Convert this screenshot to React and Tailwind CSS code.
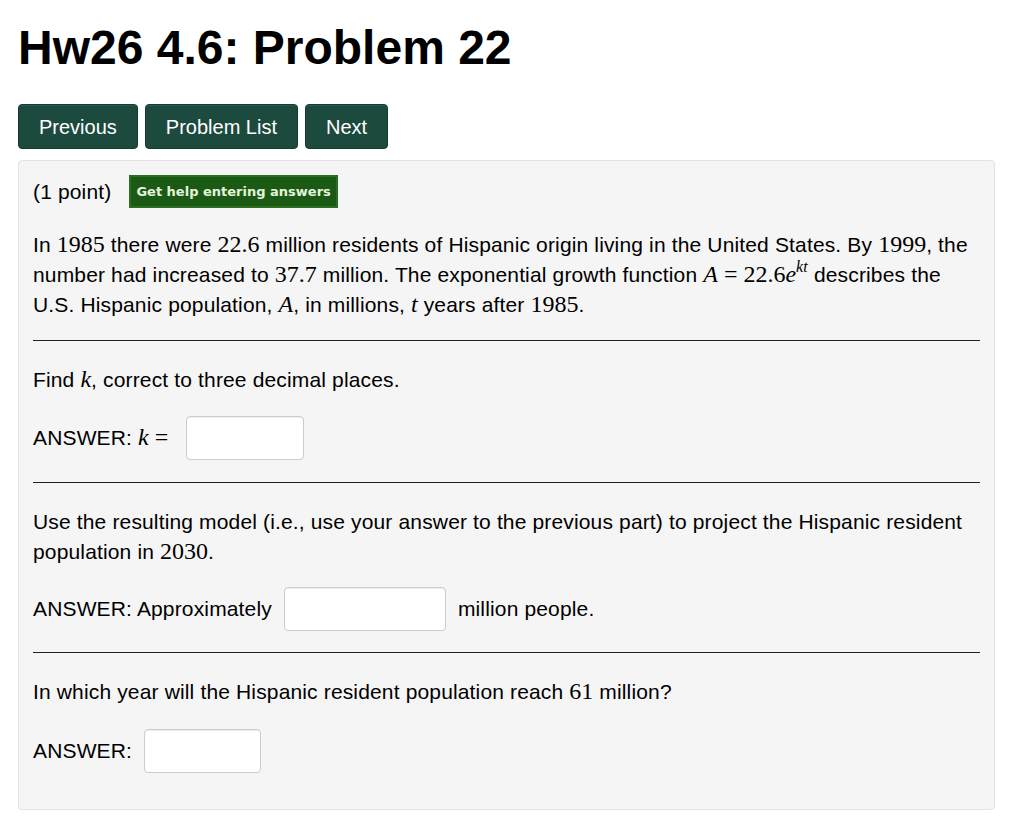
import React from "react";

const M = ({ children, className = "" }) => (
  <span className={`font-['Liberation_Serif',serif] text-[24px] leading-none tracking-normal ${className}`}>{children}</span>
);

const V = ({ children }) => <M className="italic">{children}</M>;

const Eq = () => <M className="mx-[6px]">=</M>;

function NavButton({ children }) {
  return (
    <button className="h-[45px] px-[20px] rounded-[4px] bg-[#1d4a3e] border border-[#163b31] text-white text-[20px] shadow-[inset_0_1px_0_rgba(255,255,255,0.08)]">
      {children}
    </button>
  );
}

function AnswerBox({ w }) {
  return (
    <input
      type="text"
      className={`${w} h-[44px] rounded-[4px] border border-[#cccccc] bg-white shadow-[inset_0_1px_1px_rgba(0,0,0,0.075)] outline-none`}
    />
  );
}

export default function App() {
  return (
    <div className="min-h-screen bg-white px-[18px] pt-[24px] text-black font-['Liberation_Sans',Arial,sans-serif]">
      {/* Title */}
      <h1 className="text-[48px] leading-[48px] font-bold">Hw26 4.6: Problem 22</h1>

      {/* Navigation */}
      <div className="flex gap-[7px] mt-[32px]">
        <NavButton>Previous</NavButton>
        <NavButton>Problem List</NavButton>
        <NavButton>Next</NavButton>
      </div>

      {/* Problem */}
      <div className="mt-[11px] mr-[11px] rounded-[4px] border border-[#e3e3e3] bg-[#f5f5f5] p-[14px] pb-[36px] text-[21px] leading-[30px] tracking-[0.15px]">
        <div className="flex items-center gap-[18px] h-[33px]">
          <span>(1 point)</span>
          <span className="h-[33px] px-[5px] flex items-center bg-[#1b5a14] border-2 border-[#2a6e22] text-[#e4f3dc] text-[13px] font-bold tracking-normal font-['DejaVu_Sans',sans-serif]">
            Get help entering answers
          </span>
        </div>

        <p className="mt-[22px]">
          In <M>1985</M> there were <M>22.6</M> million residents of Hispanic origin living in the United States. By <M>1999</M>, the
          number had increased to <M>37.7</M> million. The exponential growth function <V>A</V>
          <Eq />
          <M>22.6</M>
          <V>e</V>
          <sup className="font-['Liberation_Serif',serif] italic text-[16px] -top-[10px]">kt</sup> describes the U.S.
          Hispanic population, <V>A</V>, in millions, <V>t</V> years after <M>1985</M>.
        </p>

        <hr className="mt-[20px] border-0 border-t border-[#222]" />

        <p className="mt-[24px]">
          Find <V>k</V>, correct to three decimal places.
        </p>
        <div className="mt-[21px] flex items-center gap-[12px]">
          <span>
            ANSWER: <V>k</V>
            <Eq />
          </span>
          <AnswerBox w="w-[118px]" />
        </div>

        <hr className="mt-[22px] border-0 border-t border-[#222]" />

        <p className="mt-[24px]">
          Use the resulting model (i.e., use your answer to the previous part) to project the Hispanic resident population in <M>2030</M>.
        </p>
        <div className="mt-[20px] flex items-center gap-[12px]">
          <span>ANSWER: Approximately</span>
          <AnswerBox w="w-[162px]" />
          <span>million people.</span>
        </div>

        <hr className="mt-[21px] border-0 border-t border-[#222]" />

        <p className="mt-[24px]">
          In which year will the Hispanic resident population reach <M>61</M> million?
        </p>
        <div className="mt-[22px] flex items-center gap-[12px]">
          <span>ANSWER:</span>
          <AnswerBox w="w-[117px]" />
        </div>
      </div>
    </div>
  );
}
